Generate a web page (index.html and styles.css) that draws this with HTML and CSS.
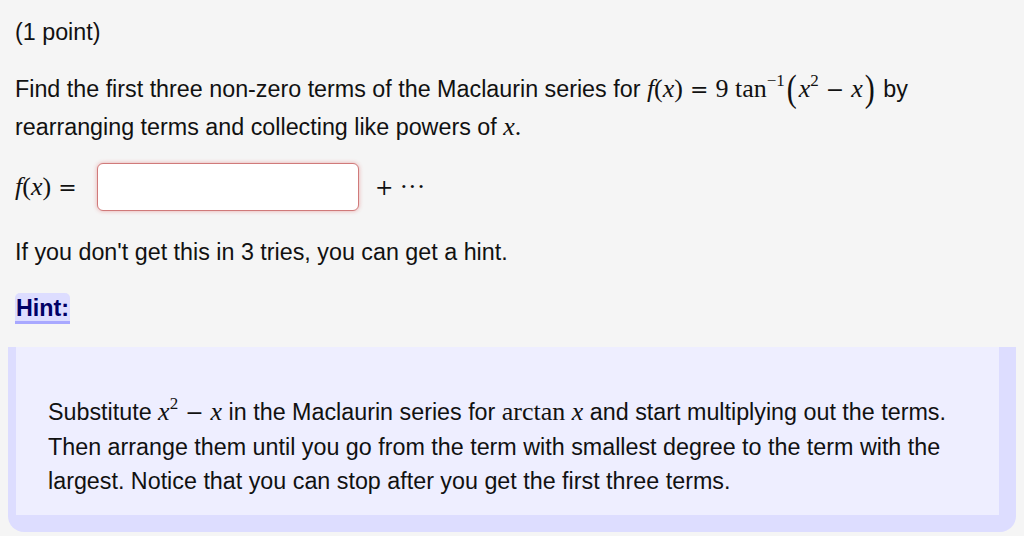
FILE: index.html
```html
<!DOCTYPE html>
<html>

<head>
    <meta charset="UTF-8">
    <title>Maclaurin series</title>
    <link rel="stylesheet" href="styles.css">
</head>

<body>
    <div class="problem">
        <div class="point">(1 point)</div>

        <div class="question">
            Find the first three non-zero terms of the Maclaurin series for
            <span class="math"><i>f</i>(<i>x</i>)<span class="op">=</span>9 tan<sup>&minus;1</sup><span class="big">(</span><i>x</i><sup>2</sup><span class="op">&minus;</span><i>x</i><span class="big">)</span></span>
            by<br>
            rearranging terms and collecting like powers of <span class="math"><i>x</i>.</span>
        </div>

        <div class="answer">
            <span class="math lhs"><i>f</i>(<i>x</i>)<span class="op">=</span></span>
            <input type="text" class="answer-box">
            <span class="math rest"><span class="op">+</span>&middot;&middot;&middot;</span>
        </div>

        <div class="tries">If you don't get this in 3 tries, you can get a hint.</div>

        <div class="hint-label">Hint:</div>

        <div class="hint-box">
            <div class="hint-text">
                Substitute <span class="math"><i>x</i><sup>2</sup><span class="op">&minus;</span><i>x</i></span> in the Maclaurin series for <span class="math">arctan <i>x</i></span> and start multiplying out the terms.<br>
                Then arrange them until you go from the term with smallest degree to the term with the<br>
                largest. Notice that you can stop after you get the first three terms.
            </div>
        </div>
    </div>
</body>

</html>
```

FILE: styles.css
```css
html, body {
    margin: 0;
    padding: 0;
    background-color: #f5f5f5;
}

.problem {
    margin: 0 8px;
    font-family: "Liberation Sans", Arial, sans-serif;
    font-size: 23.3px;
    color: #111111;
}

.point {
    padding: 20px 0 0 7px;
    line-height: 24px;
}

.question {
    margin-top: 26px;
    padding-left: 7px;
    line-height: 37px;
}

.math {
    font-family: "Liberation Serif", "Times New Roman", serif;
    font-size: 26px;
}

.math i {
    font-style: italic;
}

.math sup {
    font-size: 17px;
    line-height: 0;
    vertical-align: 11px;
}

.math .op {
    font-family: "DejaVu Serif", serif;
    font-size: 22px;
    padding: 0 7px;
}

.math .big {
    display: inline-block;
    font-size: 30px;
    line-height: 0;
    transform: scaleY(1.25) translateY(1px);
    margin: 0 2px;
}

.answer {
    display: flex;
    align-items: center;
    margin-top: 17px;
    padding-left: 7px;
    height: 48px;
}

.answer .lhs {
    width: 82px;
}

.answer-box {
    width: 262px;
    height: 48px;
    box-sizing: border-box;
    border: 1px solid #d07a7a;
    border-radius: 6px;
    background: #ffffff;
    box-shadow: 0 0 4px rgba(220, 80, 80, 0.45);
    outline: none;
}

.answer .rest {
    margin-left: 9px;
}

.answer .rest .op {
    padding: 0 6px 0 7px;
}

.tries {
    margin-top: 29px;
    padding-left: 7px;
    line-height: 24px;
}

.hint-label {
    display: inline-block;
    margin: 29px 0 0 7px;
    padding: 2px 1px 0 1px;
    height: 26px;
    line-height: 26px;
    font-weight: bold;
    color: #000066;
    background-color: #ddddff;
    border-bottom: 3px solid #a8a8ff;
    border-radius: 5px 5px 0 0;
}

.hint-box {
    margin-top: 23px;
    background-color: #ddddff;
    padding: 0 17px 17px 8px;
    border-radius: 0 0 16px 16px;
}

.hint-text {
    background-color: #eeeeff;
    padding: 48px 0 17px 32px;
    line-height: 34px;
}
```
